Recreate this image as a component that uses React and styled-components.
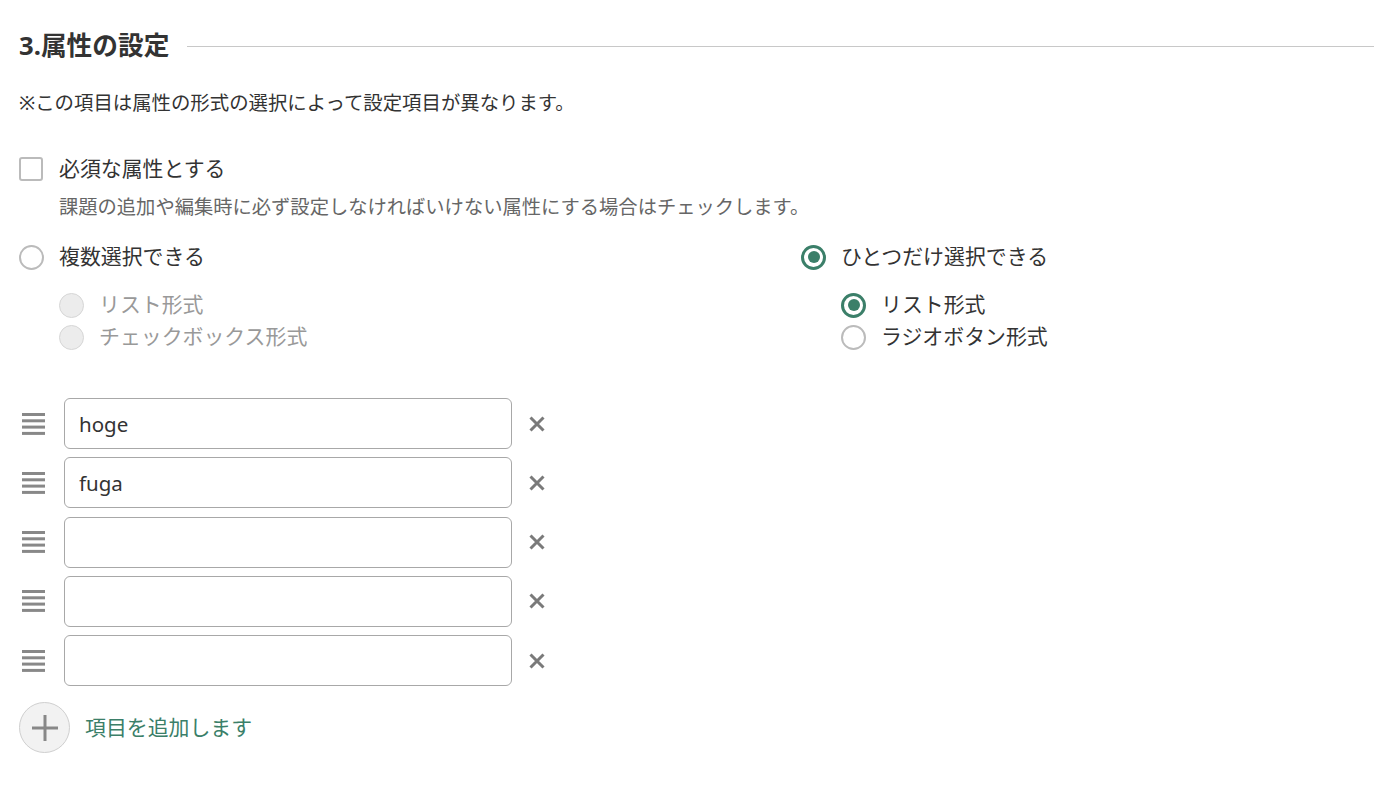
import React from "react";
import styled, { createGlobalStyle } from "styled-components";

const GREEN = "#3b7f69";

const Global = createGlobalStyle`
  html, body { margin: 0; padding: 0; background: #fff; }
  body {
    font-family: "Noto Sans", "Noto Sans CJK JP", sans-serif;
    color: #333;
  }
  * { box-sizing: border-box; }
`;

const Page = styled.div`
  padding: 30px 0 40px 19px;
`;

const HeadingRow = styled.div`
  display: flex;
  align-items: center;
  gap: 18px;
  height: 32px;
`;

const Heading = styled.h2`
  margin: 0;
  font-size: 25.7px;
  font-weight: 700;
  line-height: 32px;
  color: #333;
  white-space: nowrap;
`;

const Rule = styled.div`
  flex: 1;
  height: 1px;
  background: #c8c8c8;
`;

const Note = styled.p`
  margin: 27px 0 0;
  font-size: 19.4px;
  line-height: 28px;
`;

const CheckRow = styled.label`
  display: flex;
  align-items: center;
  gap: 16px;
  margin-top: 38px;
  height: 28px;
  font-size: 20.9px;
`;

const LabelText = styled.span`
  line-height: 28px;
  padding-bottom: 3px;
`;

const CheckBox = styled.span`
  width: 24px;
  height: 24px;
  border: 2px solid #bbb;
  border-radius: 3px;
  background: #fff;
  flex: none;
`;

const Description = styled.p`
  margin: 10px 0 0 40px;
  font-size: 19.3px;
  line-height: 28px;
  color: #666;
`;

const Columns = styled.div`
  display: grid;
  grid-template-columns: 782px 1fr;
  margin-top: 22px;
`;

const Column = styled.div`
  display: flex;
  flex-direction: column;
`;

const RadioRow = styled.label`
  display: flex;
  align-items: center;
  gap: 15px;
  height: ${(p) => (p.$sub ? "32px" : "28px")};
  margin-left: ${(p) => (p.$sub ? "40px" : "0")};
  font-size: 20.9px;
  color: ${(p) => (p.$disabled ? "#999" : "#333")};
`;

const SubGroup = styled.div`
  display: flex;
  flex-direction: column;
  margin-top: 18px;
`;

const RadioCircle = styled.span`
  position: relative;
  width: 25px;
  height: 25px;
  border-radius: 50%;
  flex: none;
  border: ${(p) =>
    p.$checked ? `3px solid ${GREEN}` : p.$disabled ? "1px solid #d6d6d6" : "2.5px solid #bbb"};
  background: ${(p) => (p.$disabled ? "#ececec" : "#fff")};
  &::after {
    content: "";
    display: ${(p) => (p.$checked ? "block" : "none")};
    position: absolute;
    left: 50%;
    top: 50%;
    width: 12px;
    height: 12px;
    margin: -6px 0 0 -6px;
    border-radius: 50%;
    background: ${GREEN};
  }
`;

const ItemList = styled.div`
  display: flex;
  flex-direction: column;
  gap: 8.25px;
  margin-top: 45px;
`;

const ItemRow = styled.div`
  display: flex;
  align-items: center;
  height: 51px;
`;

const Handle = styled.span`
  display: flex;
  width: 23px;
  margin-left: 3px;
  margin-right: 19px;
  color: #888;
`;

const TextInput = styled.input`
  width: 448px;
  height: 51px;
  border: 1px solid #a8a8a8;
  border-radius: 6px;
  padding: 0 14px;
  font-family: "Noto Sans", "Noto Sans CJK JP", sans-serif;
  font-size: 20.5px;
  color: #333;
  background: #fff;
  outline: none;
`;

const RemoveButton = styled.button`
  display: flex;
  align-items: center;
  justify-content: center;
  width: 20px;
  height: 20px;
  margin-left: 15px;
  padding: 0;
  border: none;
  background: none;
  color: #7a7a7a;
  cursor: pointer;
`;

const AddRow = styled.div`
  display: flex;
  align-items: center;
  gap: 15px;
  margin-top: 16px;
`;

const AddCircle = styled.button`
  display: flex;
  align-items: center;
  justify-content: center;
  width: 51px;
  height: 51px;
  border-radius: 50%;
  border: 1px solid #cfcfcf;
  background: #f2f2f2;
  color: #888;
  padding: 0;
  cursor: pointer;
`;

const AddText = styled.span`
  font-size: 20.9px;
  line-height: 28px;
  padding-bottom: 2px;
  color: ${GREEN};
`;

const HandleIcon = () => (
  <svg width="23" height="22" viewBox="0 0 23 22">
    {[0, 6.3, 12.6, 18.9].map((y) => (
      <rect key={y} x="0" y={y} width="23" height="3" fill="currentColor" />
    ))}
  </svg>
);

const XIcon = () => (
  <svg width="16" height="16" viewBox="0 0 16 16">
    <path d="M1.5 1.5 L14.5 14.5 M14.5 1.5 L1.5 14.5" stroke="currentColor" strokeWidth="3" />
  </svg>
);

const PlusIcon = () => (
  <svg width="28" height="28" viewBox="0 0 28 28">
    <path d="M14 1 V27 M1 14 H27" stroke="currentColor" strokeWidth="3" />
  </svg>
);

const Radio = ({ checked, disabled, sub, children }) => (
  <RadioRow $sub={sub} $disabled={disabled}>
    <RadioCircle $checked={checked} $disabled={disabled} />
    <LabelText>{children}</LabelText>
  </RadioRow>
);

const items = ["hoge", "fuga", "", "", ""];

export default function App() {
  return (
    <>
      <Global />
      <Page>
        <HeadingRow>
          <Heading>3.属性の設定</Heading>
          <Rule />
        </HeadingRow>
        <Note>※この項目は属性の形式の選択によって設定項目が異なります。</Note>
        <CheckRow>
          <CheckBox />
          <LabelText>必須な属性とする</LabelText>
        </CheckRow>
        <Description>
          課題の追加や編集時に必ず設定しなければいけない属性にする場合はチェックします。
        </Description>
        <Columns>
          <Column>
            <Radio>複数選択できる</Radio>
            <SubGroup>
              <Radio sub disabled>リスト形式</Radio>
              <Radio sub disabled>チェックボックス形式</Radio>
            </SubGroup>
          </Column>
          <Column>
            <Radio checked>ひとつだけ選択できる</Radio>
            <SubGroup>
              <Radio sub checked>リスト形式</Radio>
              <Radio sub>ラジオボタン形式</Radio>
            </SubGroup>
          </Column>
        </Columns>
        <ItemList>
          {items.map((v, i) => (
            <ItemRow key={i}>
              <Handle>
                <HandleIcon />
              </Handle>
              <TextInput defaultValue={v} />
              <RemoveButton aria-label="削除">
                <XIcon />
              </RemoveButton>
            </ItemRow>
          ))}
        </ItemList>
        <AddRow>
          <AddCircle aria-label="追加">
            <PlusIcon />
          </AddCircle>
          <AddText>項目を追加します</AddText>
        </AddRow>
      </Page>
    </>
  );
}
